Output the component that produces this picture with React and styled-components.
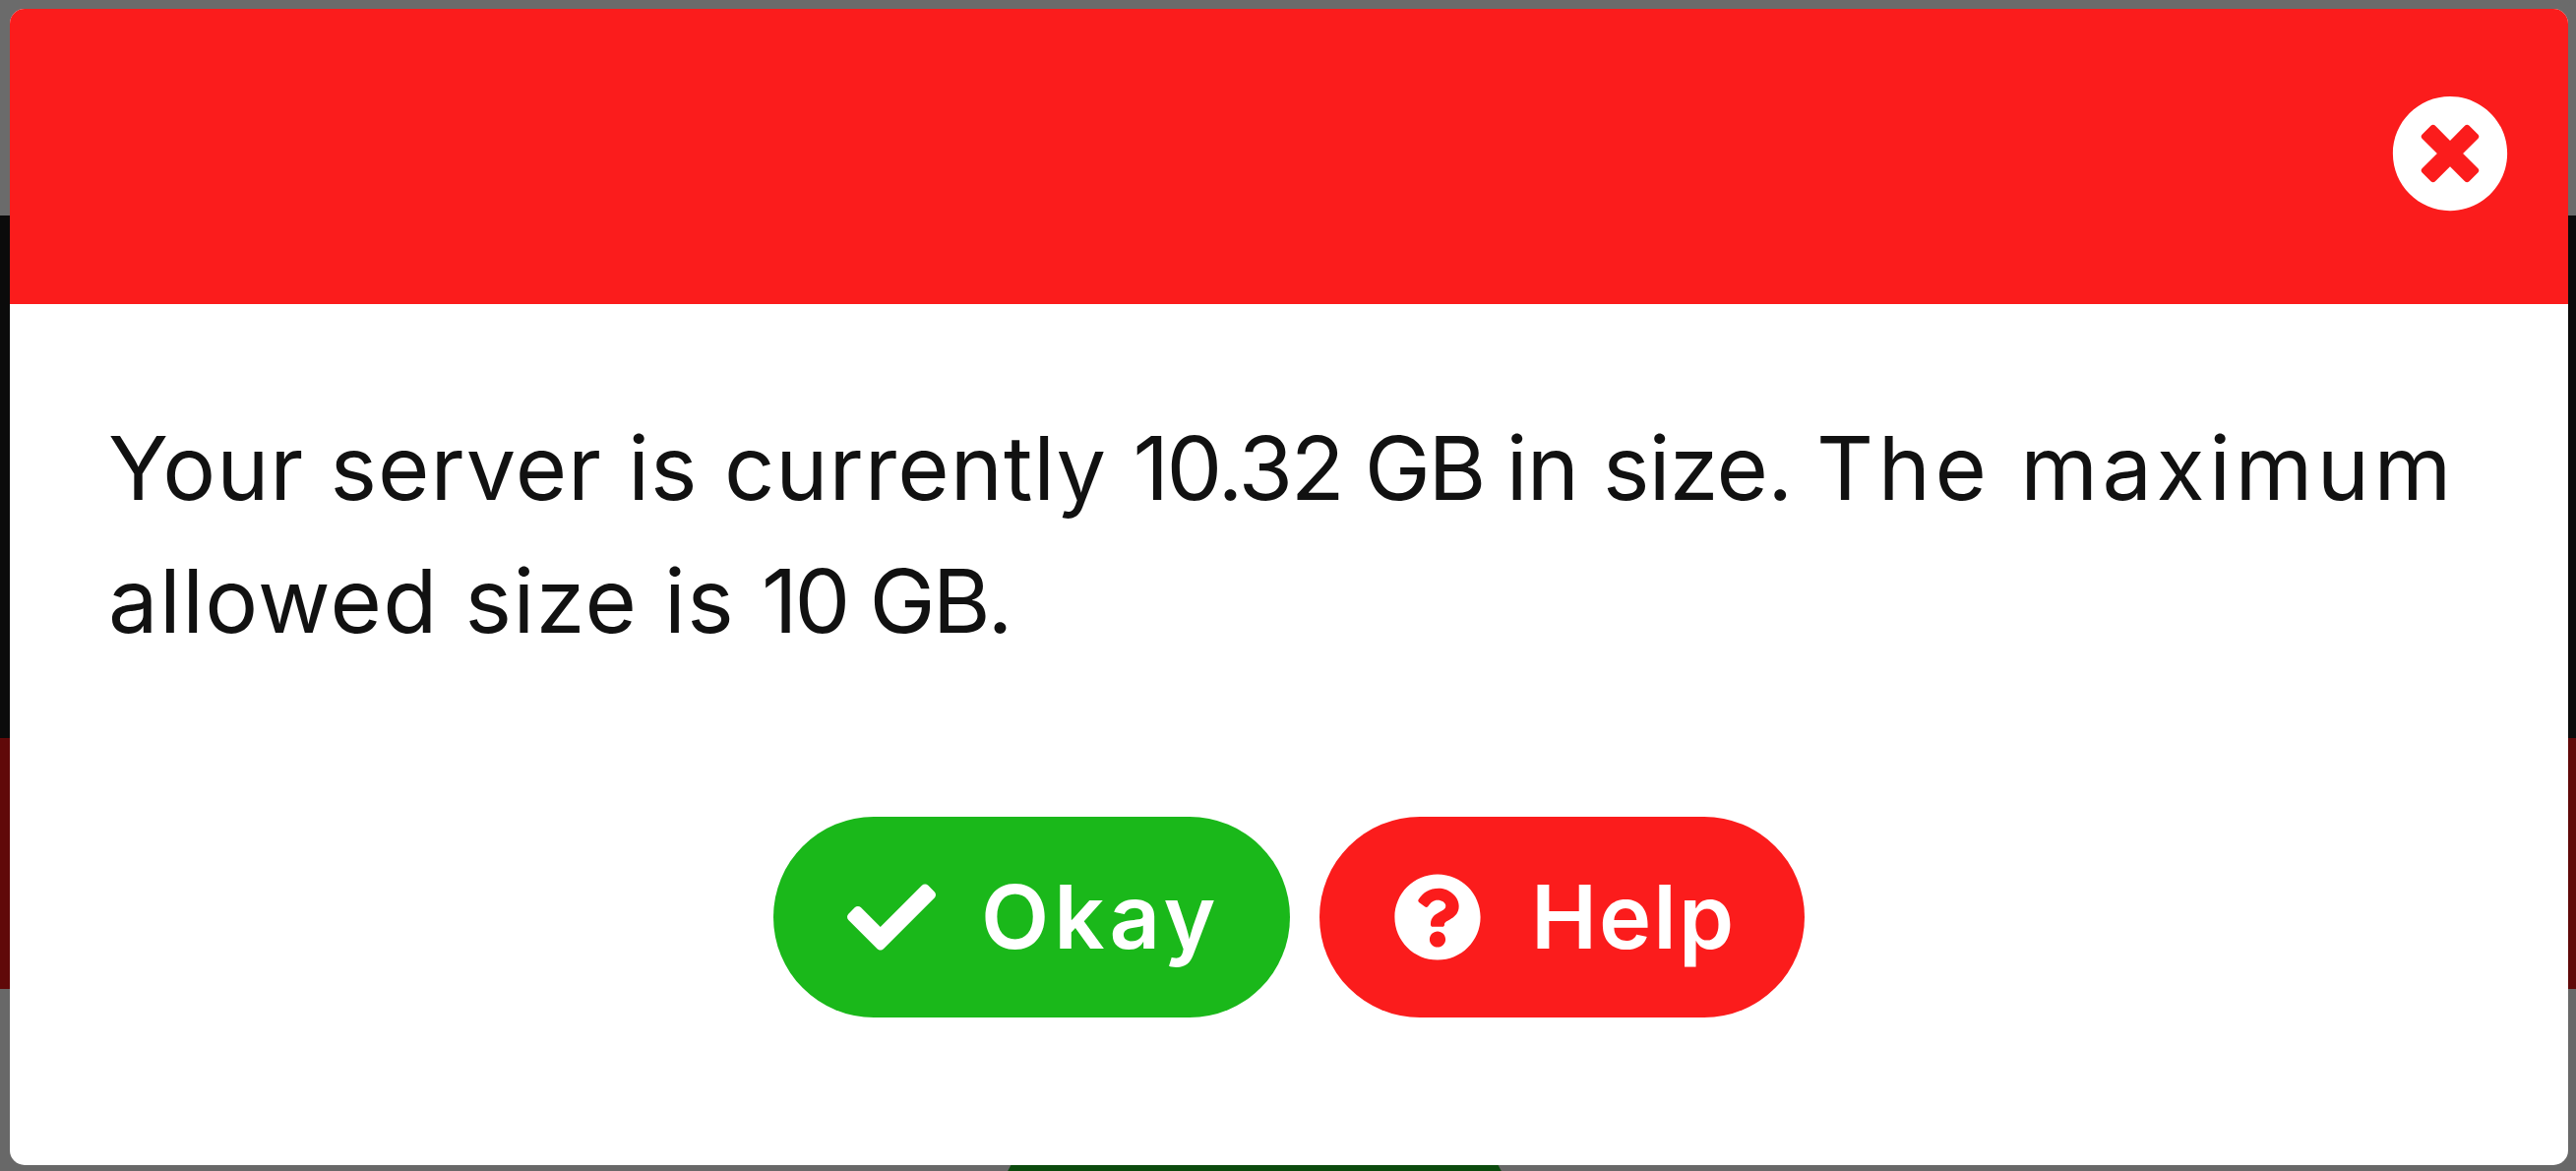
import React from "react";
import styled, { createGlobalStyle } from "styled-components";
import { FaCheck, FaQuestionCircle, FaTimesCircle } from "react-icons/fa";

const Global = createGlobalStyle`
  html, body { margin: 0; padding: 0; height: 100%; overflow: hidden; background: #6a6a6a; }
  * { box-sizing: border-box; }
`;

const Page = styled.div`
  position: relative;
  width: 2618px;
  height: 1190px;
  overflow: hidden;
  font-family: Inter, "Liberation Sans", sans-serif;
`;

const Backdrop = styled.div`
  display: flex;
  flex-direction: column;
  height: 100%;
`;

const Band = styled.div`
  flex: none;
  height: ${(p) => p.$height}px;
  background: ${(p) => p.$color};
`;

const BottomBand = styled.div`
  flex: 1;
  min-height: 0;
  background: #686868;
  padding: 129px 0 0 1014px;
`;

const HiddenButton = styled.div`
  width: 522px;
  height: 204px;
  border-radius: 100px;
  background: #0b4a0d;
`;

const Overlay = styled.div`
  position: absolute;
  inset: 9px 8px 6px 10px;
`;

const Modal = styled.div`
  display: flex;
  flex-direction: column;
  height: 100%;
  background: #fff;
  border-radius: 15px;
  overflow: hidden;
`;

const Header = styled.header`
  display: flex;
  justify-content: flex-end;
  align-items: center;
  height: 300px;
  padding: 0 60px 6px 0;
  background: #fb1c1c;
`;

const CloseButton = styled.button`
  display: flex;
  padding: 0;
  border: 0;
  background: none;
  color: #fff;
  font-size: 120px;
`;

const Message = styled.p`
  margin: 0;
  padding: 99px 90px 0 100px;
  font-size: 90px;
  font-weight: 400;
  line-height: 135px;
  color: #111;
`;

const Run = styled.span`
  letter-spacing: ${(p) => p.$track}px;
`;

const Actions = styled.div`
  display: flex;
  justify-content: center;
  gap: 30px;
  margin-top: 152px;
`;

const ActionButton = styled.button`
  display: flex;
  align-items: center;
  gap: ${(p) => p.$gap}px;
  width: ${(p) => p.$width}px;
  height: 204px;
  padding: 0 0 0 75px;
  border: 0;
  border-radius: 102px;
  background: ${(p) => p.$color};
  color: #fff;
  font: 600 90px/1 Inter, "Liberation Sans", sans-serif;
  letter-spacing: ${(p) => p.$track}px;
`;

const Icon = styled.span`
  display: flex;
  font-size: 90px;
`;

export default function App() {
  return (
    <Page>
      <Global />
      <Backdrop>
        <Band $height={219} $color="#6b6b6b" />
        <Band $height={531} $color="#0b0b0b" />
        <Band $height={255} $color="#600909" />
        <BottomBand>
          <HiddenButton />
        </BottomBand>
      </Backdrop>
      <Overlay>
        <Modal>
          <Header>
            <CloseButton aria-label="Close">
              <FaTimesCircle />
            </CloseButton>
          </Header>
          <Message>
            <Run $track={1}>Your server is currently </Run>
            <Run $track={-2.5}>10.32 GB </Run>
            <Run $track={-0.7}>in size. </Run>
            <Run $track={4.5}>The maximum </Run>
            <Run $track={1.4}>allowed size is </Run>
            <Run $track={-3}>10 GB.</Run>
          </Message>
          <Actions>
            <ActionButton $color="#1ab81a" $gap={46} $width={525} $track={5}>
              <Icon><FaCheck /></Icon>
              Okay
            </ActionButton>
            <ActionButton $color="#fb1c1c" $gap={50} $width={493} $track={2}>
              <Icon><FaQuestionCircle /></Icon>
              Help
            </ActionButton>
          </Actions>
        </Modal>
      </Overlay>
    </Page>
  );
}
